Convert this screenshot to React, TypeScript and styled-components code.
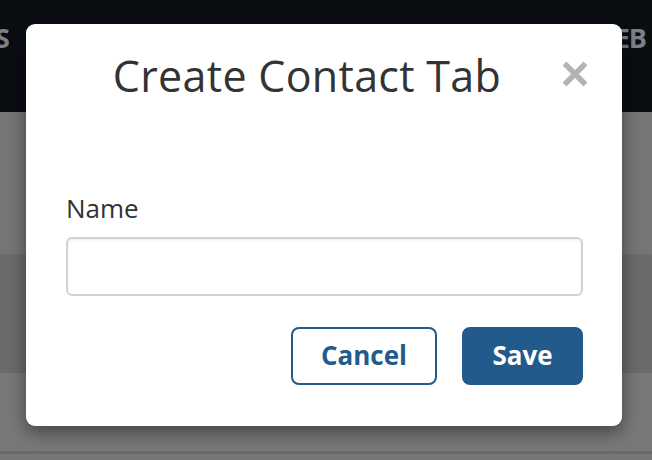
import React from "react";
import styled, { createGlobalStyle } from "styled-components";

const Global = createGlobalStyle`
  html, body {
    margin: 0;
    padding: 0;
    background: #777777;
    font-family: "Open Sans", "Liberation Sans", sans-serif;
  }
  * { box-sizing: border-box; }
`;

const Page = styled.div`
  position: relative;
  width: 652px;
  height: 460px;
  overflow: hidden;
  display: flex;
  flex-direction: column;
  background: #777777;
`;

const TopBar = styled.div`
  height: 112px;
  flex: none;
  background: #0a0d12;
  display: flex;
  justify-content: space-between;
  align-items: flex-start;
  padding: 21px 6px 0 0;
`;

const NavItem = styled.div<{ $clip?: boolean }>`
  font-family: "Open Sans", "Liberation Sans", sans-serif;
  font-weight: 700;
  font-size: 27px;
  line-height: 34px;
  letter-spacing: -1px;
  color: #7d8085;
  white-space: nowrap;
  ${(p) =>
    p.$clip
      ? `width: 9px; overflow: hidden; display: flex; justify-content: flex-end;`
      : ""}
`;

const Band = styled.div<{ $h: number; $bg: string }>`
  height: ${(p) => p.$h}px;
  flex: none;
  background: ${(p) => p.$bg};
`;

const Modal = styled.div`
  position: absolute;
  left: 26px;
  top: 24px;
  width: 596px;
  height: 402px;
  background: #ffffff;
  border-radius: 9px;
  box-shadow: 0 6px 18px rgba(0, 0, 0, 0.45);
  display: flex;
  flex-direction: column;
  padding: 27px 0 0 0;
`;

const Header = styled.div`
  display: flex;
  align-items: center;
  padding: 0 34px 0 26px;
`;

const Title = styled.h2`
  flex: 1;
  margin: 0;
  text-align: center;
  font-family: "Open Sans", "Liberation Sans", sans-serif;
  font-weight: 500;
  font-size: 43px;
  line-height: 50px;
  letter-spacing: 0.3px;
  color: #333333;
`;

const CloseButton = styled.button`
  width: 26px;
  height: 26px;
  padding: 0;
  border: 0;
  background: transparent;
  display: flex;
  align-items: center;
  justify-content: center;
  cursor: pointer;
  margin-top: -5px;
`;

const Body = styled.div`
  display: flex;
  flex-direction: column;
  padding: 90px 39px 0 40px;
`;

const Label = styled.label`
  font-family: "Open Sans", "Liberation Sans", sans-serif;
  font-size: 26px;
  line-height: 34px;
  color: #333333;
`;

const Input = styled.input`
  margin-top: 12px;
  height: 59px;
  width: 100%;
  border: 2px solid #d2d2d2;
  border-radius: 6px;
  box-shadow: inset 0 1px 2px rgba(0, 0, 0, 0.08);
  font-family: "Open Sans", "Liberation Sans", sans-serif;
  font-size: 22px;
  padding: 0 12px;
  outline: none;
`;

const Actions = styled.div`
  margin-top: 31px;
  display: flex;
  justify-content: flex-end;
  gap: 25px;
`;

const Button = styled.button<{ $primary?: boolean; $w: number }>`
  width: ${(p) => p.$w}px;
  height: 58px;
  border-radius: 8px;
  border: 2px solid #235a8c;
  background: ${(p) => (p.$primary ? "#235a8c" : "#ffffff")};
  color: ${(p) => (p.$primary ? "#ffffff" : "#235a8c")};
  font-family: "Open Sans", "Liberation Sans", sans-serif;
  font-weight: 700;
  font-size: 26px;
  line-height: 1;
  padding: 0 0 2px;
  cursor: pointer;
`;

export default function App() {
  return (
    <>
      <Global />
      <Page>
        <TopBar>
          <NavItem $clip>
            <span>CONTACTS</span>
          </NavItem>
          <NavItem>WEB</NavItem>
        </TopBar>
        <Band $h={142} $bg="#767676" />
        <Band $h={119} $bg="#6b6b6b" />
        <Band $h={78} $bg="#787878" />
        <Band $h={3} $bg="#686868" />
        <Band $h={6} $bg="#777777" />
        <Modal role="dialog" aria-label="Create Contact Tab">
          <Header>
            <Title>Create Contact Tab</Title>
            <CloseButton aria-label="Close">
              <svg width="26" height="26" viewBox="0 0 26 26">
                <path
                  d="M2.5 2.5 L23.5 23.5 M23.5 2.5 L2.5 23.5"
                  stroke="#b3b3b3"
                  strokeWidth="5.5"
                  strokeLinecap="butt"
                  fill="none"
                />
              </svg>
            </CloseButton>
          </Header>
          <Body>
            <Label htmlFor="tab-name">Name</Label>
            <Input id="tab-name" type="text" />
            <Actions>
              <Button $w={146}>Cancel</Button>
              <Button $w={121} $primary>
                Save
              </Button>
            </Actions>
          </Body>
        </Modal>
      </Page>
    </>
  );
}
